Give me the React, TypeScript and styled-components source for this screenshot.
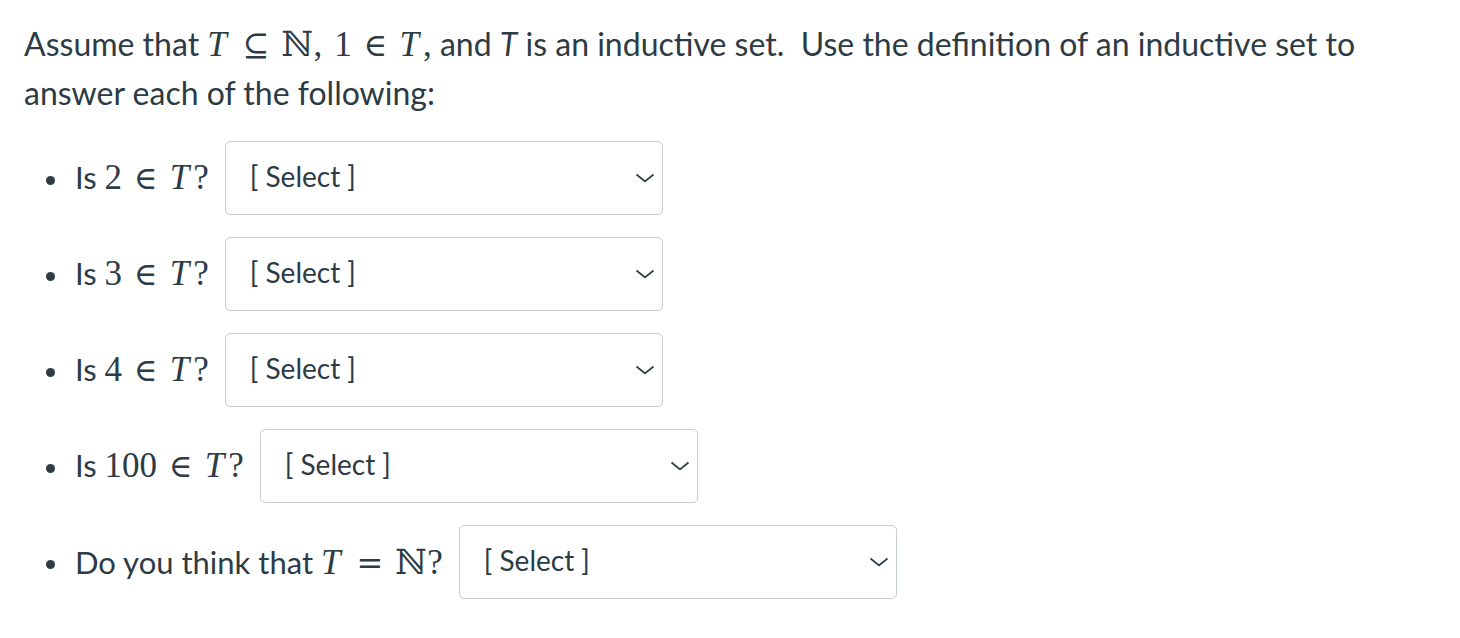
import styled, { createGlobalStyle } from 'styled-components'

const GlobalStyle = createGlobalStyle`
  body {
    margin: 0;
    background: #fff;
    color: #2d3b45;
    font-family: 'Lato', 'Noto Sans', sans-serif;
  }
`

const Page = styled.div`
  padding: 20px 24px 0;
  max-width: 1400px;
`

const Prompt = styled.p`
  margin: 0;
  font-size: 32px;
  line-height: 48px;
`

const Math = styled.span<{ $italic?: boolean }>`
  font-family: 'Liberation Serif', 'DejaVu Serif', serif;
  font-size: 35px;
  font-style: ${p => (p.$italic ? 'italic' : 'normal')};
  padding-right: ${p => (p.$italic ? '4px' : '0')};
`

const Sym = styled.span`
  font-family: 'DejaVu Serif', serif;
  font-size: 32px;
  font-weight: 300;
  padding: 0 12px;
`

const Gap = styled.span`
  display: inline-block;
  width: 12px;
`

const List = styled.ul`
  margin: 24px 0 0;
  padding: 0 0 0 51px;
  display: flex;
  flex-direction: column;
  gap: 22px;
  font-size: 31px;
`

const Item = styled.li`
  display: flex;
  align-items: center;
  height: 74px;
  position: relative;

  &::before {
    content: '';
    position: absolute;
    left: -29px;
    top: 50%;
    width: 9px;
    height: 9px;
    margin-top: -2px;
    border-radius: 50%;
    background: #2d3b45;
  }
`

const Label = styled.span`
  white-space: nowrap;
`

const SelectBox = styled.div`
  box-sizing: border-box;
  width: 438px;
  height: 74px;
  margin-left: 16px;
  border: 1.5px solid #c7cdd1;
  border-radius: 5px;
  display: flex;
  align-items: center;
  justify-content: space-between;
  padding: 0 7px 0 24px;
  font-size: 28px;
  background: #fff;
`

const Placeholder = styled.span`
  margin-top: -5px;
`

const Chevron = () => (
  <svg width="20" height="10" viewBox="0 0 20 10" fill="none">
    <path d="M1.5 1.5 L10 8.5 L18.5 1.5" stroke="#2d3b45" strokeWidth="1.7" />
  </svg>
)

const T = () => <Math $italic>T</Math>
const Q = () => <Math>?</Math>

const questions = [
  <>Is <Math>2</Math><Sym>∈</Sym><T /><Q /></>,
  <>Is <Math>3</Math><Sym>∈</Sym><T /><Q /></>,
  <>Is <Math>4</Math><Sym>∈</Sym><T /><Q /></>,
  <>Is <Math>100</Math><Sym>∈</Sym><T /><Q /></>,
  <>Do you think that <T /><Sym>=</Sym><Math>ℕ</Math><Q /></>,
]

const App = () => {
  return (
    <>
      <GlobalStyle />
      <Page>
        <Prompt>
          Assume that <T /><Sym>⊆</Sym><Math>ℕ</Math><Math>,</Math><Gap /><Math>1</Math><Sym>∈</Sym><T />
          <Math>,</Math> and <i>T</i> is an inductive set.&nbsp; Use the definition of an inductive set to
          answer each of the following:
        </Prompt>
        <List>
          {questions.map((q, i) => (
            <Item key={i}>
              <Label>{q}</Label>
              <SelectBox>
                <Placeholder>[ Select ]</Placeholder>
                <Chevron />
              </SelectBox>
            </Item>
          ))}
        </List>
      </Page>
    </>
  )
}

export default App
